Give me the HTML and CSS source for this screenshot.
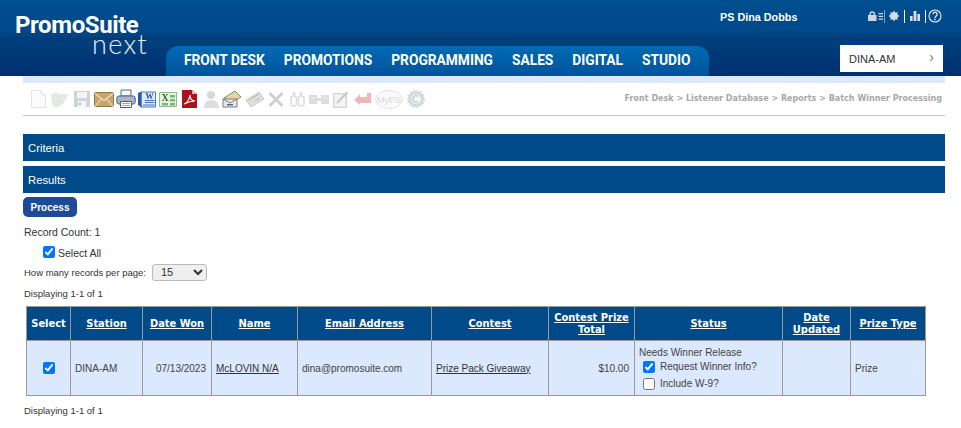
FILE: index.html
```html
<!DOCTYPE html>
<html lang="en">
<head>
<meta charset="utf-8">
<title>Batch Winner Processing</title>
<link rel="stylesheet" href="styles.css">
</head>
<body>
<header class="masthead">
  <div class="mast-top">
    <div class="user-name">PS Dina Dobbs</div>
    <div class="util-icons">
      <svg class="util" width="16" height="10" viewBox="0 0 16 10"><path d="M1.500 4V3a2.800 2.800 0 0 1 5.600 0v1H8.500v6H0V4zM3 4h2.600V3A1.300 1.300 0 0 0 3 3z" fill="#c9d8ea"/><path d="M10.500 2h4.500v1.300h-4.500zM10.500 4.700h4.500V6h-4.500zM10.500 7.400h4.500v1.300h-4.500z" fill="#c9d8ea"/></svg>
      <span class="sep dim"></span>
      <svg class="util m4" width="10" height="10" viewBox="0 0 10 10"><circle cx="5" cy="5" r="2.800" fill="none" stroke="#d5e0ee" stroke-width="2"/><path d="M5 0v10M0 5h10M1.500 1.500l7 7M8.500 1.500l-7 7" stroke="#d5e0ee" stroke-width="1.300"/></svg>
      <span class="sep m5"></span>
      <svg class="util m5" width="10" height="10" viewBox="0 0 10 10"><path d="M0 5h2.600v5H0zM3.600 0h2.800v10H3.600zM7.400 3H10v7H7.400z" fill="#d5e0ee"/></svg>
      <span class="sep m5"></span>
      <svg class="util m2" width="14" height="14" viewBox="0 0 14 14"><circle cx="7" cy="7" r="6" fill="none" stroke="#e4ebf4" stroke-width="1.100"/><path d="M4.900 5.300a2.100 2.100 0 1 1 3.300 1.700C7.400 7.600 7 8 7 9" fill="none" stroke="#e4ebf4" stroke-width="1.300"/><path d="M6.300 9.800h1.400v1.400H6.300z" fill="#e4ebf4"/></svg>
    </div>
  </div>
  <div class="mast-bottom">
    <nav class="main-nav">
      <a>FRONT DESK</a><a>PROMOTIONS</a><a>PROGRAMMING</a><a>SALES</a><a>DIGITAL</a><a>STUDIO</a>
    </nav>
    <div class="station-box"><span>DINA-AM</span><span class="chev">&rsaquo;</span></div>
  </div>
  <div class="logo"><div class="logo-main">PromoSuite</div><div class="logo-sub">next</div></div>
</header>

<main class="page">
  <div class="strip"></div>
  <div class="toolbar">
    <div class="tools">
      <svg class="off g4" width="15" height="18" viewBox="0 0 15 18"><path d="M.5.500h9.500L14.500 5V17.500H.5z" fill="#fbfbfb" stroke="#e0e0e0"/><path d="M10 .5V5h4.500" fill="none" stroke="#e0e0e0"/></svg>
      <svg class="off g5" width="19" height="17" viewBox="0 0 19 17"><path d="M1 3 6 1.500 9 3h10L13 13l-7 4-4-3z" fill="#e2e5e2"/></svg>
      <svg class="off g4" width="16" height="16" viewBox="0 0 16 16"><path d="M0 0h16v16H0z" fill="#c9cdd0"/><path d="M3 1h10v6H3z" fill="#f2f3f4"/><path d="M4 10h8v6H4z" fill="#f2f3f4"/><path d="M5 12h2v2H5z" fill="#a8adb0"/></svg>
      <svg class="g2" width="20" height="15" viewBox="0 0 20 15"><rect x=".5" y=".5" width="19" height="14" rx="1.500" fill="#c6a66c" stroke="#93794a"/><path d="M1 1.500l9 7 9-7M1 14l6.500-7M19 14l-6.500-7" fill="none" stroke="#f0e2bd" stroke-width="1.100"/></svg>
      <svg class="g2" width="20" height="20" viewBox="0 0 20 20"><path d="M5 1h10v6H5z" fill="#f4f6f8" stroke="#5b6b85"/><rect x=".8" y="7" width="18.400" height="8" rx="2" fill="#a9b6c9" stroke="#4f6180"/><path d="M4.500 12.500h11v6h-11z" fill="#fff" stroke="#4f6180"/><path d="M6 14.500h8M6 16.500h8" stroke="#9aa7ba"/></svg>
      <svg class="g3" width="18" height="18" viewBox="0 0 18 18"><path d="M3 2h14.500v15H3z" fill="#e2ebf8" stroke="#4a7cc0"/><path d="M7 10.500h9.500M7 12.500h9.500M5 15h11.500" stroke="#3f74bd"/><path d="M0 3l3.500-1.500v16L0 15z" fill="#2a5cab"/><text class="tool-letter" x="7.500" y="8.500" fill="#1f4f9f">W</text></svg>
      <svg class="g4" width="18" height="18" viewBox="0 0 18 18"><path d="M.5 2.500h17v14H.5z" fill="#e6f3e1" stroke="#8dbd86"/><path d="M11 5h5v2.500h-5zM11 9h5v2.500h-5zM11 13h5v2.500h-5zM3 13h6v2.500H3z" fill="#7cb575"/><text class="tool-x" x="2.500" y="11" fill="#2c6e2e">X</text></svg>
      <svg class="g5" width="17" height="20" viewBox="0 0 17 20"><path d="M1 1h10l5 4v14H1z" fill="#ad1119"/><path d="M11 1v4h5z" fill="#e9b4b6"/><path d="M3 15c3-1 5-4 6-9 0 4 2 6 5 6-3 0-7 1-11 3z" fill="none" stroke="#fff" stroke-width="1.100"/></svg>
      <svg class="off g2" width="17" height="19" viewBox="0 0 17 19"><circle cx="8" cy="5" r="4" fill="#d2d2d2"/><path d="M1 18c0-5 2-8 7-8s8 3 8 8z" fill="#d8d8d8"/></svg>
      <svg class="g2" width="21" height="18" viewBox="0 0 21 18"><path d="M2 8 13 1l6 6-8 5z" fill="#e6d5a0" stroke="#8a8a7a"/><path d="M1 9h14v8H1z" fill="#e5e7ea" stroke="#7b7f86"/><path d="M1 9l7 4 7-4" fill="none" stroke="#7b7f86"/><path d="M5 14h6v1.500H5z" fill="#5b6a82"/></svg>
      <svg class="off g3" width="20" height="17" viewBox="0 0 20 17"><path d="M1 9 14 1l5 7-13 8z" fill="#d8dcd8" stroke="#bfc4bf"/><path d="M3.500 9.500l11-7M10 10l5-3" stroke="#a6aca6"/></svg>
      <svg class="off g6" width="16" height="15" viewBox="0 0 16 15"><path d="M1.500 1l13 13M14.500 1l-13 13" stroke="#c8c8c8" stroke-width="2.800"/></svg>
      <svg class="off g4" width="15" height="16" viewBox="0 0 15 16"><rect x="1" y="5" width="5.500" height="10" rx="2.500" fill="none" stroke="#d8d8d8" stroke-width="1.600"/><rect x="8.500" y="5" width="5.500" height="10" rx="2.500" fill="none" stroke="#d8d8d8" stroke-width="1.600"/><path d="M2.500 1h3v4h-3zM9.500 1h3v4h-3z" fill="#dedede"/></svg>
      <svg class="off g4" width="20" height="11" viewBox="0 0 20 11"><path d="M0 1h8v9H0zM12 1h8v9h-8z" fill="#d8d8d8"/><path d="M8 5.500h4" stroke="#d8d8d8" stroke-width="3"/><path d="M2 4h4M14 4h4" stroke="#f1f1f1"/></svg>
      <svg class="off g5" width="16" height="17" viewBox="0 0 16 17"><path d="M.8 2.800h12.500V16.200H.8z" fill="#f4f4f4" stroke="#d0d0d0" stroke-width="1.500"/><path d="M4 12 14.500 1" stroke="#bdbdbd" stroke-width="2"/></svg>
      <svg class="off g4" width="17" height="12" viewBox="0 0 17 12"><path d="M0 7l6-6v3h7V0h4v10H6v2z" fill="#f2a9a9"/></svg>
      <svg class="off g4" width="28" height="19" viewBox="0 0 28 19"><ellipse cx="14" cy="9.500" rx="13.400" ry="9" fill="#fafafa" stroke="#dcdcdc"/><text class="tool-myps" x="14" y="13" fill="#cfcfcf">MyPS</text></svg>
      <svg class="off" width="18" height="20" viewBox="0 0 18 20"><circle cx="9" cy="10" r="6.500" fill="#f4f5f7" stroke="#ccd1d8" stroke-width="3"/><circle cx="9" cy="10" r="8.300" fill="none" stroke="#d6dae0" stroke-width="1.800" stroke-dasharray="2 1.600"/><path d="M11 7.500a3.200 3.200 0 1 0 0 5" fill="none" stroke="#b5bbc4" stroke-width="1.300"/></svg>
    </div>
    <div class="crumbs">Front Desk &gt; Listener Database &gt; Reports &gt; Batch Winner Processing</div>
  </div>

  <div class="panel-bar first">Criteria</div>
  <div class="panel-bar second">Results</div>
  <button class="process-btn" type="button">Process</button>
  <div class="record-count">Record Count: 1</div>
  <label class="select-all"><input type="checkbox" checked><span>Select All</span></label>
  <div class="per-page">
    <span>How many records per page:</span>
    <select class="page-select"><option>15</option></select>
  </div>
  <div class="displaying top">Displaying 1-1 of 1</div>

  <table class="results">
    <colgroup>
      <col class="c1"><col class="c2"><col class="c3"><col class="c4"><col class="c5"><col class="c6"><col class="c7"><col class="c8"><col class="c9"><col class="c10">
    </colgroup>
    <thead>
      <tr>
        <th class="plain">Select</th>
        <th><a>Station</a></th>
        <th><a>Date Won</a></th>
        <th><a>Name</a></th>
        <th><a>Email Address</a></th>
        <th><a>Contest</a></th>
        <th><a>Contest Prize Total</a></th>
        <th><a>Status</a></th>
        <th><a>Date Updated</a></th>
        <th><a>Prize Type</a></th>
      </tr>
    </thead>
    <tbody>
      <tr>
        <td class="center"><input type="checkbox" checked></td>
        <td>DINA-AM</td>
        <td class="right">07/13/2023</td>
        <td><a>McLOVIN N/A</a></td>
        <td>dina@promosuite.com</td>
        <td><a>Prize Pack Giveaway</a></td>
        <td class="right">$10.00</td>
        <td class="status">
          <div>Needs Winner Release</div>
          <label class="status-opt first"><input type="checkbox" checked><span>Request Winner Info?</span></label>
          <label class="status-opt"><input type="checkbox"><span>Include W-9?</span></label>
        </td>
        <td></td>
        <td>Prize</td>
      </tr>
    </tbody>
  </table>
  <div class="displaying bottom">Displaying 1-1 of 1</div>
</main>
</body>
</html>
```

FILE: styles.css
```css
* { box-sizing: border-box; }
html, body { margin: 0; padding: 0; background: #fff; }
body { font-family: "Liberation Sans", Arial, sans-serif; font-size: 11px; color: #333; width: 961px; height: 428px; overflow: hidden; }

.masthead { position: relative; height: 76px; background: linear-gradient(#004f8f 0, #00498a 30px, #003f7c 38px, #003d7a 39px, #003f7d 41px, #002f6e 76px); }
.mast-top { height: 39px; border-bottom: 1px solid #003a74; position: relative; }
.user-name { position: absolute; left: 720px; top: 10px; font: bold 10.800px/15px "Liberation Sans", Arial, sans-serif; color: #fff; }
.util-icons { position: absolute; left: 868px; top: 9px; display: flex; align-items: center; height: 14px; }
.util { display: block; }
.sep { width: 1px; height: 13px; background: #fff; }
.sep.dim { background: #7fa3c9; }
.m2 { margin-left: 2px; }
.m4 { margin-left: 4px; }
.m5 { margin-left: 5px; }

.mast-bottom { height: 37px; padding: 7px 18px 0 166px; display: flex; align-items: flex-start; justify-content: space-between; }
.main-nav { width: 543px; height: 30px; padding: 0 0 2px 18px; display: flex; gap: 19px; align-items: center; background: linear-gradient(#006ab4, #00539c); border-radius: 12px 12px 0 0; }
.main-nav a { font: bold 13.750px/28px Roboto, "Liberation Sans", sans-serif; color: #fff; white-space: nowrap; }
.station-box { width: 103px; height: 27px; margin-top: -1px; background: #fff; display: flex; justify-content: space-between; align-items: center; padding: 0 9px; font: 11px "Liberation Sans", Arial, sans-serif; color: #333; }
.chev { font-size: 14px; color: #777; margin-top: -3px; }

.logo { position: absolute; left: 15px; top: 14px; width: 133px; }
.logo-main { font: bold 24px/22px Roboto, "Liberation Sans", sans-serif; color: #fff; letter-spacing: -0.4px; }
.logo-sub { margin-top: 1px; font: 300 27px/14px Lato, Roboto, sans-serif; color: #e8eef6; text-align: right; letter-spacing: 1.300px; }

.page { padding: 0 16px 0 23px; }
.strip { height: 7px; background: #dbe8fd; }
.toolbar { height: 33px; border-bottom: 1px solid #c8c8c8; display: flex; justify-content: space-between; align-items: center; padding: 0 3px 0 8px; }
.tools { display: flex; align-items: center; }
.tools svg { filter: blur(.3px); }
.off { opacity: .85; }
.g2 { margin-right: 2px; }
.g3 { margin-right: 3px; }
.g4 { margin-right: 4px; }
.g5 { margin-right: 5px; }
.g6 { margin-right: 6px; }
.tool-letter { font: bold 8px "Liberation Serif", serif; }
.tool-x { font: bold 10px "Liberation Serif", serif; }
.tool-myps { font: 9px "Liberation Sans", sans-serif; text-anchor: middle; }
.crumbs { font: bold 8px/12px "DejaVu Sans", Verdana, sans-serif; letter-spacing: 0.02px; color: #a8a8a8; white-space: nowrap; }

.panel-bar { height: 27px; padding-left: 5px; background: #004a8a; color: #fff; font: 11.300px/28px "Liberation Sans", Arial, sans-serif; }
.panel-bar.first { margin-top: 18px; }
.panel-bar.second { margin-top: 5px; }

.process-btn { display: block; margin-top: 4px; width: 54px; height: 20px; padding: 1px 0 0; border: 0; border-radius: 5px; background: #1e4a98; color: #fff; font: bold 10px/19px "Liberation Sans", Arial, sans-serif; }
.record-count { margin-top: 8px; font-size: 10.500px; line-height: 14px; margin-left: 1px; }
.select-all { display: flex; align-items: center; margin: 6px 0 0 20px; height: 14px; font-size: 10.500px; }
.select-all input { width: 12px; height: 12px; margin: 0 3px 0 0; }
.select-all span { margin-top: 1px; }
.per-page { display: flex; align-items: center; margin: 4px 0 0 1px; font-size: 9.500px; height: 18px; }
.page-select { width: 55px; height: 17px; margin-left: 6px; font: 11px "Liberation Sans", Arial, sans-serif; color: #333; background: #efefef; border: 1px solid #bbb; border-radius: 3px; padding-left: 4px; }
.displaying { margin-left: 1px; font-size: 9.500px; line-height: 12px; }
.displaying.top { margin-top: 7px; }
.displaying.bottom { margin-top: 9px; }

.results { margin: 6px 0 0 3px; width: 899px; border-collapse: collapse; table-layout: fixed; }
.c1 { width: 44px; } .c2 { width: 72px; } .c3 { width: 69px; } .c4 { width: 86px; } .c5 { width: 134px; }
.c6 { width: 117px; } .c7 { width: 86px; } .c8 { width: 148px; } .c9 { width: 68px; } .c10 { width: 75px; }
.results th, .results td { border: 1px solid #999; }
.results th { height: 34px; padding: 0 2px; background: #004a8a; color: #fff; font: bold 9.900px/12px "DejaVu Sans", Verdana, sans-serif; text-align: center; }
.results th a { text-decoration: underline; }
.results td { height: 55px; padding: 0 4px; background: #dbe8fd; font-size: 10px; color: #444; }
.results td a { text-decoration: underline; color: #333; }
.results td.center { text-align: center; padding: 0; }
.results td.center input { width: 12px; height: 12px; margin: 0; vertical-align: middle; }
.results td.right { text-align: right; padding-right: 5px; }
.results td.status { line-height: 12px; padding-top: 4px; padding-bottom: 0; }
.status-opt { display: flex; align-items: center; height: 18px; margin-left: 4px; }
.status-opt.first { height: 17px; margin-top: -1px; }
.status-opt input { width: 12px; height: 12px; margin: 0 5px 0 0; }
```
